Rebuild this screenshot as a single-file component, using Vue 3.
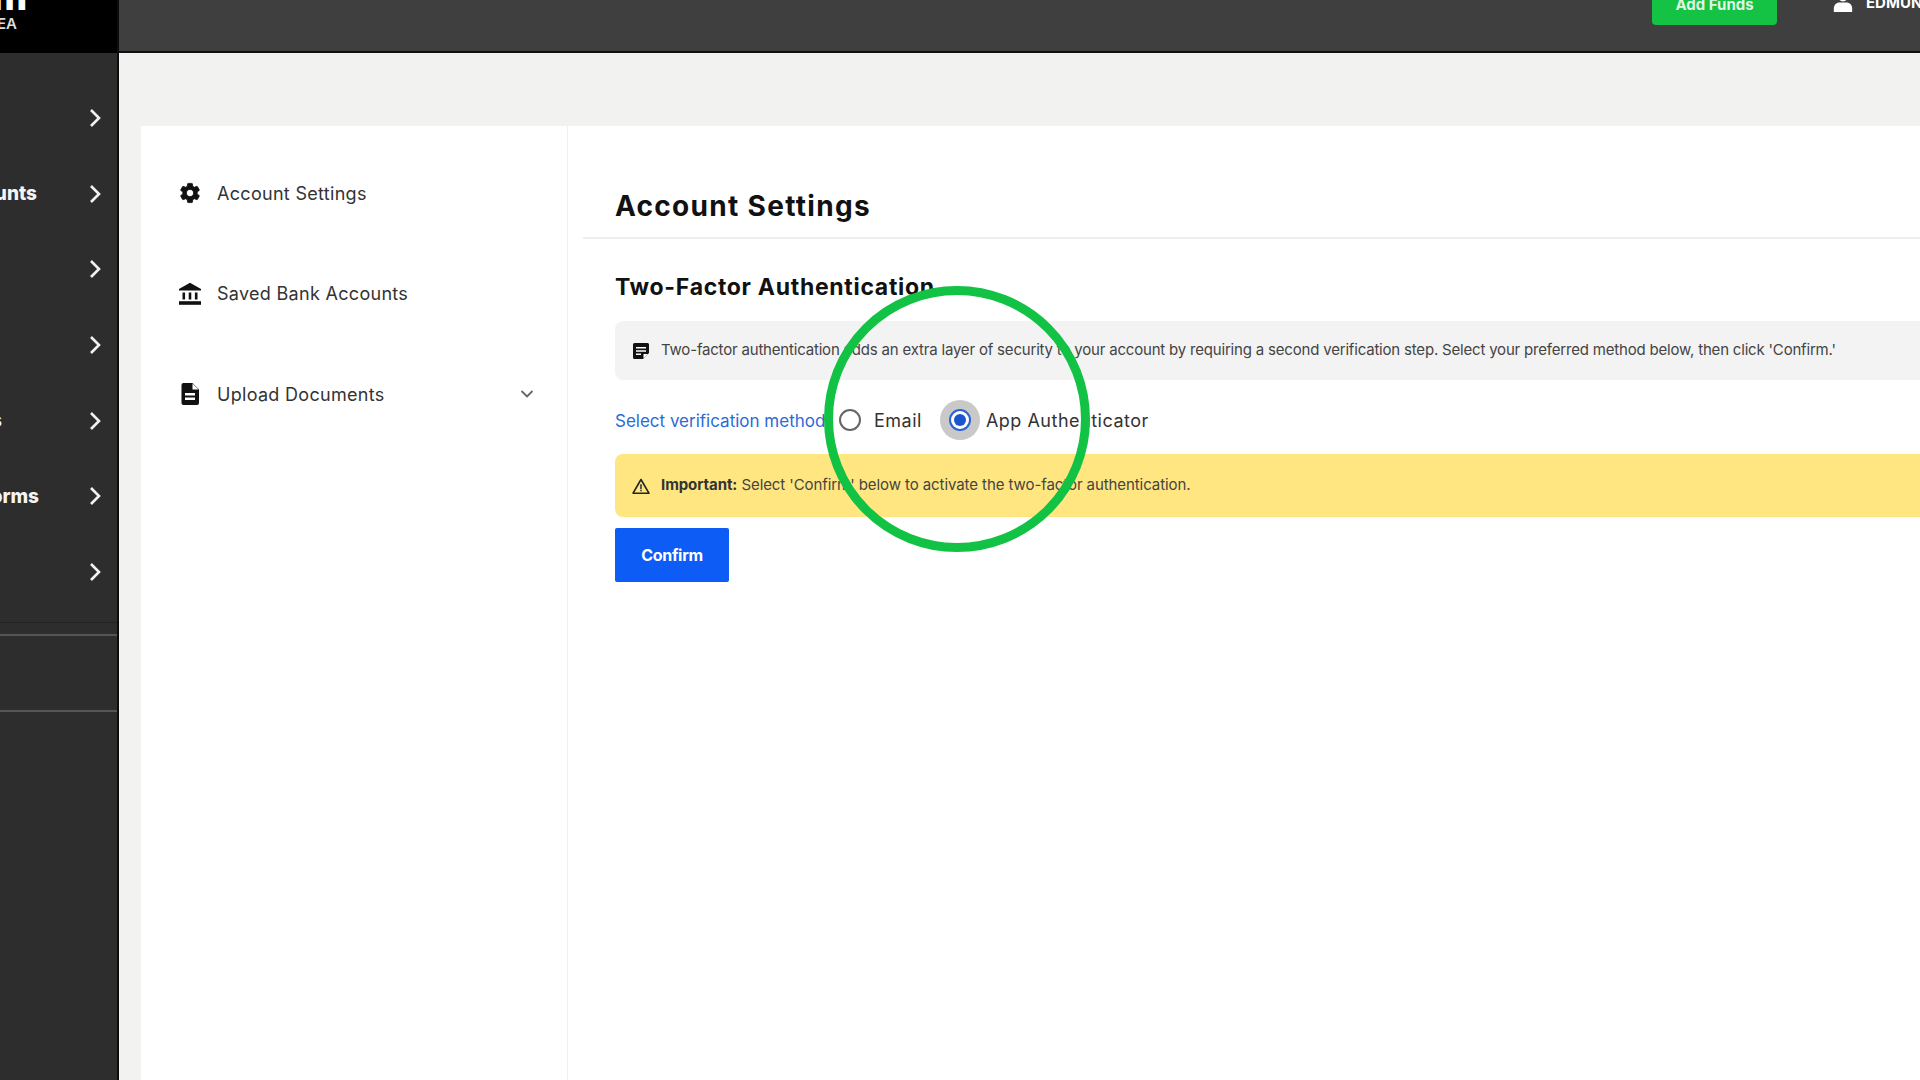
<template>
  <div class="page">
    <aside class="sidebar">
      <div class="logo">
        <span class="logo-mark">m</span>
        <span class="logo-sub">EA</span>
      </div>
      <nav class="side-nav">
        <a v-for="item in sideItems" :key="item.label" class="side-item">
          <span class="side-label" :style="{ width: item.clip + 'px' }"><span>{{ item.label }}</span></span>
          <svg class="side-chevron" viewBox="0 0 14 22" width="14" height="22">
            <path d="M3 3l8 8-8 8" fill="none" stroke="#f2f2f2" stroke-width="2.6" />
          </svg>
        </a>
      </nav>
      <div class="side-block"></div>
    </aside>

    <div class="right">
      <header class="topbar">
        <button class="add-funds">Add Funds</button>
        <div class="user">
          <svg viewBox="0 0 24 24" width="22" height="24">
            <circle cx="12" cy="6" r="5.5" fill="#fff" />
            <path d="M2 23v-4c0-4 3-6.500 6-6.500h8c3 0 6 2.500 6 6.500v4z" fill="#fff" />
          </svg>
          <span>EDMUND</span>
        </div>
      </header>

      <main class="content">
        <section class="card">
          <nav class="menu">
            <a class="menu-item">
              <svg class="menu-icon" viewBox="0 0 24 24">
                <path d="M19.140 12.940c.04-.3.06-.61.06-.94 0-.32-.02-.64-.07-.94l2.030-1.580a.49.49 0 0 0 .12-.61l-1.920-3.320a.488.488 0 0 0-.59-.22l-2.390.96c-.5-.38-1.030-.7-1.620-.94l-.36-2.540a.484.484 0 0 0-.48-.41h-3.840c-.24 0-.43.17-.47.41l-.36 2.540c-.59.24-1.130.57-1.620.94l-2.390-.96c-.22-.08-.47 0-.59.22L2.740 8.870c-.12.21-.08.47.12.61l2.030 1.580c-.05.3-.09.63-.09.94s.02.64.07.94l-2.030 1.580a.49.49 0 0 0-.12.61l1.920 3.320c.12.22.37.29.59.22l2.390-.96c.5.38 1.030.7 1.620.94l.36 2.540c.05.24.24.41.48.41h3.840c.24 0 .44-.17.47-.41l.36-2.540c.59-.24 1.130-.56 1.620-.94l2.390.96c.22.08.47 0 .59-.22l1.920-3.320c.12-.22.07-.47-.12-.61l-2.010-1.580zM12 15.600c-1.980 0-3.600-1.620-3.600-3.600s1.620-3.600 3.600-3.600 3.600 1.620 3.600 3.600-1.620 3.600-3.600 3.600z" fill="#111" stroke="#111" stroke-width=".8" />
              </svg>
              <span>Account Settings</span>
            </a>
            <a class="menu-item">
              <svg class="menu-icon" viewBox="0 0 24 24">
                <path d="M12 .8L23 7v1.400H1V7z" fill="#111" />
                <path d="M4.500 10.500h2.600v7H4.500zM10.700 10.500h2.600v7h-2.600zM16.900 10.500h2.600v7h-2.600z" fill="#111" />
                <path d="M1 19.200h22v3.600H1z" fill="#111" />
              </svg>
              <span>Saved Bank Accounts</span>
            </a>
            <a class="menu-item">
              <svg class="menu-icon" viewBox="0 0 24 24">
                <path d="M5.500 1h9L21 7.500V21a2 2 0 0 1-2 2H5.500a2 2 0 0 1-2-2V3a2 2 0 0 1 2-2z" fill="#111" />
                <path d="M14.500 1.500v6h6z" fill="#fff" />
                <path d="M7 11h10v2.500H7zM7 15.500h10V18H7z" fill="#fff" />
              </svg>
              <span>Upload Documents</span>
              <svg class="menu-caret" viewBox="0 0 14 10" width="14" height="10">
                <path d="M1.500 2l5.500 5.500L12.500 2" fill="none" stroke="#666" stroke-width="1.800" />
              </svg>
            </a>
          </nav>

          <div class="pane">
            <div class="pane-head">
              <h1>Account Settings</h1>
            </div>
            <div class="pane-body">
              <h2>Two-Factor Authentication</h2>
              <div class="notice notice-info">
                <svg class="notice-icon" viewBox="0 0 18 18">
                  <path d="M2.500 1h13A1.500 1.500 0 0 1 17 2.500V11l-6 6H2.500A1.500 1.500 0 0 1 1 15.500v-13A1.500 1.500 0 0 1 2.500 1z" fill="#111" />
                  <path d="M4 5h10v1.600H4zM4 8.200h10v1.600H4zM4 11.400h5V13H4z" fill="#fff" />
                  <path d="M11.500 16.500v-4.500H16z" fill="#fff" />
                </svg>
                <p>Two-factor authentication adds an extra layer of security to your account by requiring a second verification step. Select your preferred method below, then click 'Confirm.'</p>
              </div>
              <div class="method-row">
                <span class="method-label">Select verification method:</span>
                <label class="radio">
                  <span class="radio-dot"></span>
                  <span>Email</span>
                </label>
                <label class="radio radio-on">
                  <span class="radio-dot"></span>
                  <span>App Authenticator</span>
                </label>
              </div>
              <div class="notice notice-warn">
                <svg class="notice-icon" viewBox="0 0 20 18">
                  <path d="M10 1.800L18.800 17H1.200z" fill="none" stroke="#222" stroke-width="1.800" stroke-linejoin="round" />
                  <path d="M9.200 7h1.600v5.200H9.200zM9.200 13.300h1.600v1.600H9.200z" fill="#222" />
                </svg>
                <p><b>Important:</b> Select 'Confirm' below to activate the two-factor authentication.</p>
              </div>
              <button class="confirm">Confirm</button>
            </div>
          </div>
        </section>
      </main>
    </div>

    <div class="highlight"></div>
  </div>
</template>

<script setup>
const sideItems = [
  { label: 'Dashboard', clip: 0 },
  { label: 'Accounts', clip: 37 },
  { label: 'Transfers', clip: 0 },
  { label: 'Wallets', clip: 0 },
  { label: 'Reports', clip: 2 },
  { label: 'Platforms', clip: 39 },
  { label: 'Support', clip: 0 }
]
</script>

<style>
html,
body {
  margin: 0;
  height: 100%;
  overflow: hidden;
  background: #f2f2f1;
}
</style>

<style scoped>
.page {
  position: relative;
  display: flex;
  width: 1920px;
  height: 1080px;
  overflow: hidden;
  font-family: Inter, "Liberation Sans", sans-serif;
  color: #222;
}

.sidebar {
  flex: 0 0 119px;
  display: flex;
  flex-direction: column;
  background: #2d2d2d;
  border-right: 2px solid #0c0c0c;
  box-sizing: border-box;
}
.logo {
  height: 53px;
  flex: none;
  display: flex;
  flex-direction: column;
  background: #000;
  color: #fff;
  overflow: hidden;
}
.logo-mark {
  font-size: 38px;
  font-weight: 800;
  line-height: 28px;
  height: 28px;
  margin-top: -18px;
  margin-left: -8px;
}
.logo-sub {
  margin-top: 6px;
  margin-left: -3px;
  font-size: 15px;
  font-weight: 600;
  line-height: 16px;
  color: #ddd;
}
.side-nav {
  padding: 27px 0 12px;
  border-bottom: 1px solid #222;
}
.side-item {
  display: flex;
  align-items: center;
  justify-content: space-between;
  height: 75.7px;
  padding-right: 15px;
}
.side-label {
  display: flex;
  justify-content: flex-end;
  overflow: hidden;
  white-space: nowrap;
  color: #f4f4f4;
  font-size: 19px;
  font-weight: 800;
}
.side-block {
  height: 74px;
  margin-top: 11px;
  border-top: 2px solid #555;
  border-bottom: 2px solid #555;
}

.right {
  flex: 1;
  min-width: 0;
  display: flex;
  flex-direction: column;
}
.topbar {
  flex: none;
  height: 53px;
  box-sizing: border-box;
  display: flex;
  align-items: flex-start;
  background: #3f3f3f;
  border-bottom: 2px solid #111;
  overflow: hidden;
}
.add-funds {
  flex: none;
  width: 125px;
  height: 41px;
  margin: -16px 0 0 1533px;
  border: none;
  border-radius: 4px;
  background: #14c244;
  color: #dff7e4;
  font-family: inherit;
  font-size: 15px;
  font-weight: 700;
}
.user {
  flex: none;
  display: flex;
  align-items: center;
  gap: 12px;
  margin: -10px 0 0 55px;
  color: #fff;
  font-size: 15px;
  font-weight: 700;
  white-space: nowrap;
}

.content {
  flex: 1;
  padding: 73px 0 0 22px;
  background: #f2f2f1;
}
.card {
  display: flex;
  width: 1900px;
  height: 100%;
  background: #fff;
}
.menu {
  flex: 0 0 427px;
  box-sizing: border-box;
  padding: 17px 33px 0 37px;
  border-right: 1px solid #efefef;
}
.menu-item {
  display: flex;
  align-items: center;
  height: 100.500px;
  color: #333;
  font-size: 18px;
  letter-spacing: 0.3px;
}
.menu-icon {
  flex: none;
  width: 24px;
  height: 24px;
  margin-right: 15px;
}
.menu-caret {
  margin-left: auto;
}

.pane {
  flex: 1;
  min-width: 0;
  padding-left: 15px;
}
.pane-head {
  height: 113px;
  box-sizing: border-box;
  padding: 62px 0 0 32px;
  border-bottom: 2px solid #eee;
}
h1 {
  margin: 0;
  font-size: 28px;
  line-height: 36px;
  font-weight: 700;
  letter-spacing: 1.3px;
  color: #111;
}
.pane-body {
  padding-left: 32px;
}
h2 {
  margin: 32px 0 18px;
  font-size: 23px;
  line-height: 32px;
  font-weight: 700;
  letter-spacing: 0.7px;
  color: #111;
}
.notice {
  display: flex;
  align-items: center;
  border-radius: 8px;
  padding-left: 17px;
}
.notice p {
  margin: 0 0 2px;
  font-size: 15px;
  white-space: nowrap;
}
.notice-icon {
  flex: none;
  width: 18px;
  height: 18px;
  margin-right: 11px;
}
.notice-info {
  height: 59px;
  background: #f3f3f3;
  color: #444;
}
.notice-info p {
  letter-spacing: -0.19px;
}
.method-row {
  display: flex;
  align-items: center;
  height: 40px;
  margin: 20px 0 14px;
  font-size: 18px;
}
.method-label {
  width: 224px;
  flex: none;
  margin-top: 1px;
  color: #2a6bd8;
  font-size: 17px;
  white-space: nowrap;
}
.radio {
  position: relative;
  display: flex;
  align-items: center;
  gap: 13px;
  color: #333;
  letter-spacing: 0.5px;
}
.radio + .radio {
  margin-left: 27px;
  gap: 15px;
}
.radio-dot {
  position: relative;
  width: 22px;
  height: 22px;
  box-sizing: border-box;
  border: 2px solid #666;
  border-radius: 50%;
  background: #fff;
}
.radio-on .radio-dot {
  border-color: #2a62d6;
  box-shadow: 0 0 0 9px #c9c9c9;
}
.radio-on .radio-dot::after {
  content: "";
  position: absolute;
  inset: 3px;
  border-radius: 50%;
  background: #1a55cf;
}
.notice-warn {
  height: 63px;
  background: #ffe680;
  color: #444;
}
.notice-warn p {
  letter-spacing: -0.08px;
}
.notice-warn b {
  color: #333;
}
.confirm {
  display: block;
  width: 114px;
  height: 54px;
  margin-top: 11px;
  border: none;
  border-radius: 2px;
  background: #0d5cf5;
  color: #fff;
  font-family: inherit;
  font-size: 16px;
  font-weight: 700;
  letter-spacing: -0.3px;
}

.highlight {
  position: absolute;
  left: 824px;
  top: 286px;
  width: 266px;
  height: 266px;
  box-sizing: border-box;
  border: 9px solid #12c244;
  border-radius: 50%;
}
</style>
